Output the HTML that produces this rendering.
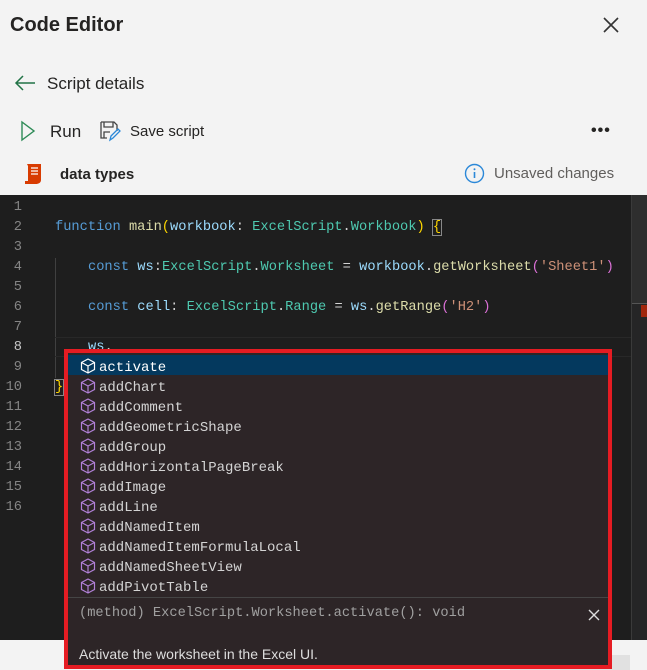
<!DOCTYPE html>
<html><head><meta charset="utf-8">
<style>
*{margin:0;padding:0;box-sizing:border-box}
html,body{width:647px;height:670px;overflow:hidden;background:#f3f3f3;font-family:"Liberation Sans",sans-serif;position:relative}
.abs{position:absolute;white-space:nowrap}
.mono{font-family:"Liberation Mono",monospace;font-size:13.7px}
#ed{position:absolute;left:0;top:195px;width:647px;height:445px;background:#1e1e1e}
#inner{position:absolute;left:0;top:3px;width:631px;height:440px}
#sb{position:absolute;left:631px;top:195px;width:16px;height:445px;background:#252526;border-left:1px solid #3a3a3a}
.ln{position:absolute;left:0;width:22px;text-align:right;color:#858585}
.kw{color:#569cd6}.ty{color:#4ec9b0}.st{color:#ce9178}.fn{color:#dcdcaa}.pl{color:#d4d4d4}.br{color:#ffd700}.vr{color:#9cdcfe}
#box{position:absolute;left:64px;top:349px;width:548px;height:320px;border:4px solid #e51c23}
#list{position:absolute;left:0;top:0;width:540px;height:244px;background:#2d2527}
.it{position:absolute;left:0;width:540px;height:20px;color:#d4d4d4}
.it svg{position:absolute;left:12px;top:3px}
.it span{position:absolute;left:31px;top:5px;font-size:14px}
#doc{position:absolute;left:0;top:244px;width:540px;height:68px;background:#2d2527;border-top:1px solid #454545}
</style></head><body>
<div class="abs" style="left:10px;top:14px;font-size:20px;font-weight:bold;color:#252423">Code Editor</div>
<svg class="abs" style="left:602px;top:16px" width="18" height="18" viewBox="0 0 18 18"><path d="M2 2L16 16M16 2L2 16" stroke="#333" stroke-width="1.6"/></svg>
<svg class="abs" style="left:14px;top:75px" width="22" height="16" viewBox="0 0 22 16"><path d="M21 8H2M9 1L2 8L9 15" stroke="#217346" stroke-width="1.5" fill="none"/></svg>
<div class="abs" style="left:47px;top:74px;font-size:17px;color:#252423">Script details</div>
<svg class="abs" style="left:20px;top:120px" width="16" height="22" viewBox="0 0 16 22"><path d="M2 2L14 11L2 20Z" stroke="#2e8b57" stroke-width="1.4" fill="none"/></svg>
<div class="abs" style="left:50px;top:122px;font-size:17px;color:#252423">Run</div>
<svg class="abs" style="left:99px;top:120px" width="22" height="22" viewBox="0 0 22 22"><path d="M2 2H15L18 5V11M2 2V18H8M5 2V7H14V2M5 18V12H11" stroke="#444" stroke-width="1.3" fill="none"/><path d="M11 20L12 16L19 9L21 11L14 18Z" stroke="#2b88d8" stroke-width="1.3" fill="none"/></svg>
<div class="abs" style="left:130px;top:123px;font-size:15px;color:#252423">Save script</div>
<div class="abs" style="left:591px;top:122px;font-size:16px;font-weight:bold;color:#252423;letter-spacing:1px">•••</div>
<svg class="abs" style="left:23px;top:162px" width="22" height="24" viewBox="0 0 22 24"><path d="M4 2H18V18C18 21 15 22 13 22H2V19H5V4Z" fill="#d83b01"/><path d="M8 6H15M8 9H15M8 12H15" stroke="#fff" stroke-width="1.3"/></svg>
<div class="abs" style="left:60px;top:166px;font-size:15px;font-weight:bold;color:#252423">data types</div>
<svg class="abs" style="left:464px;top:163px" width="21" height="21" viewBox="0 0 21 21"><circle cx="10.5" cy="10.5" r="9" stroke="#2b88d8" stroke-width="1.4" fill="none"/><path d="M10.5 9V15" stroke="#2b88d8" stroke-width="1.6"/><circle cx="10.5" cy="6.3" r="1" fill="#2b88d8"/></svg>
<div class="abs" style="left:494px;top:165px;font-size:15px;color:#605e5c">Unsaved changes</div>

<div class="abs" style="left:510px;top:655px;width:120px;height:15px;background:#e1e1e1"></div>

<div id="ed" class="mono"><div id="inner">
<div class="ln" style="top:2px">1</div><div class="ln" style="top:22px">2</div><div class="ln" style="top:42px">3</div><div class="ln" style="top:62px">4</div><div class="ln" style="top:82px">5</div><div class="ln" style="top:102px">6</div><div class="ln" style="top:122px">7</div><div class="ln" style="top:142px;color:#c6c6c6">8</div><div class="ln" style="top:162px">9</div><div class="ln" style="top:182px">10</div><div class="ln" style="top:202px">11</div><div class="ln" style="top:222px">12</div><div class="ln" style="top:242px">13</div><div class="ln" style="top:262px">14</div><div class="ln" style="top:282px">15</div><div class="ln" style="top:302px">16</div>
<div class="abs" style="left:55px;top:60px;width:1px;height:120px;background:#404040"></div>
<div class="abs" style="left:55px;top:139px;width:576px;height:20px;border-top:1px solid #282828;border-bottom:1px solid #282828"></div>
<div class="abs pl" style="left:55px;top:22px"><span class="kw">function</span> <span class="fn">main</span><span class="br">(</span><span class="vr">workbook</span>: <span class="ty">ExcelScript</span>.<span class="ty">Workbook</span><span class="br">)</span> <span class="br" style="outline:1px solid #888">{</span></div>
<div class="abs pl" style="left:88px;top:62px"><span class="kw">const</span> <span class="vr">ws</span>:<span class="ty">ExcelScript</span>.<span class="ty">Worksheet</span> = <span class="vr">workbook</span>.<span class="fn">getWorksheet</span><span style="color:#da70d6">(</span><span class="st">'Sheet1'</span><span style="color:#da70d6">)</span></div>
<div class="abs pl" style="left:88px;top:102px"><span class="kw">const</span> <span class="vr">cell</span>: <span class="ty">ExcelScript</span>.<span class="ty">Range</span> = <span class="vr">ws</span>.<span class="fn">getRange</span><span style="color:#da70d6">(</span><span class="st">'H2'</span><span style="color:#da70d6">)</span></div>
<div class="abs pl" style="left:88px;top:142px"><span class="vr">ws</span>.</div>
<div class="abs br" style="left:55px;top:182px;outline:1px solid #888">}</div>
</div></div>
<div id="sb"><div class="abs" style="left:0;top:0;width:16px;height:108px;background:#2e2e2e"></div><div class="abs" style="left:0;top:108px;width:16px;height:1px;background:#555"></div><div class="abs" style="left:9px;top:110px;width:7px;height:12px;background:#a1260d"></div></div>

<div id="box" class="mono">
<div id="list">
<div class="it" style="top:2px;background:#04395e;color:#fff"><svg width="16" height="16" viewBox="0 0 16 16"><path d="M8 1L14.5 4.5V11.5L8 15L1.5 11.5V4.5Z M1.5 4.5L8 8L14.5 4.5 M8 8V15" stroke="#fff" stroke-width="1.2" fill="none"/></svg><span>activate</span></div>
<div class="it" style="top:22px"><svg width="16" height="16" viewBox="0 0 16 16"><path d="M8 1L14.5 4.5V11.5L8 15L1.5 11.5V4.5Z M1.5 4.5L8 8L14.5 4.5 M8 8V15" stroke="#b180d7" stroke-width="1.2" fill="none"/></svg><span>addChart</span></div>
<div class="it" style="top:42px"><svg width="16" height="16" viewBox="0 0 16 16"><path d="M8 1L14.5 4.5V11.5L8 15L1.5 11.5V4.5Z M1.5 4.5L8 8L14.5 4.5 M8 8V15" stroke="#b180d7" stroke-width="1.2" fill="none"/></svg><span>addComment</span></div>
<div class="it" style="top:62px"><svg width="16" height="16" viewBox="0 0 16 16"><path d="M8 1L14.5 4.5V11.5L8 15L1.5 11.5V4.5Z M1.5 4.5L8 8L14.5 4.5 M8 8V15" stroke="#b180d7" stroke-width="1.2" fill="none"/></svg><span>addGeometricShape</span></div>
<div class="it" style="top:82px"><svg width="16" height="16" viewBox="0 0 16 16"><path d="M8 1L14.5 4.5V11.5L8 15L1.5 11.5V4.5Z M1.5 4.5L8 8L14.5 4.5 M8 8V15" stroke="#b180d7" stroke-width="1.2" fill="none"/></svg><span>addGroup</span></div>
<div class="it" style="top:102px"><svg width="16" height="16" viewBox="0 0 16 16"><path d="M8 1L14.5 4.5V11.5L8 15L1.5 11.5V4.5Z M1.5 4.5L8 8L14.5 4.5 M8 8V15" stroke="#b180d7" stroke-width="1.2" fill="none"/></svg><span>addHorizontalPageBreak</span></div>
<div class="it" style="top:122px"><svg width="16" height="16" viewBox="0 0 16 16"><path d="M8 1L14.5 4.5V11.5L8 15L1.5 11.5V4.5Z M1.5 4.5L8 8L14.5 4.5 M8 8V15" stroke="#b180d7" stroke-width="1.2" fill="none"/></svg><span>addImage</span></div>
<div class="it" style="top:142px"><svg width="16" height="16" viewBox="0 0 16 16"><path d="M8 1L14.5 4.5V11.5L8 15L1.5 11.5V4.5Z M1.5 4.5L8 8L14.5 4.5 M8 8V15" stroke="#b180d7" stroke-width="1.2" fill="none"/></svg><span>addLine</span></div>
<div class="it" style="top:162px"><svg width="16" height="16" viewBox="0 0 16 16"><path d="M8 1L14.5 4.5V11.5L8 15L1.5 11.5V4.5Z M1.5 4.5L8 8L14.5 4.5 M8 8V15" stroke="#b180d7" stroke-width="1.2" fill="none"/></svg><span>addNamedItem</span></div>
<div class="it" style="top:182px"><svg width="16" height="16" viewBox="0 0 16 16"><path d="M8 1L14.5 4.5V11.5L8 15L1.5 11.5V4.5Z M1.5 4.5L8 8L14.5 4.5 M8 8V15" stroke="#b180d7" stroke-width="1.2" fill="none"/></svg><span>addNamedItemFormulaLocal</span></div>
<div class="it" style="top:202px"><svg width="16" height="16" viewBox="0 0 16 16"><path d="M8 1L14.5 4.5V11.5L8 15L1.5 11.5V4.5Z M1.5 4.5L8 8L14.5 4.5 M8 8V15" stroke="#b180d7" stroke-width="1.2" fill="none"/></svg><span>addNamedSheetView</span></div>
<div class="it" style="top:222px"><svg width="16" height="16" viewBox="0 0 16 16"><path d="M8 1L14.5 4.5V11.5L8 15L1.5 11.5V4.5Z M1.5 4.5L8 8L14.5 4.5 M8 8V15" stroke="#b180d7" stroke-width="1.2" fill="none"/></svg><span>addPivotTable</span></div>
</div>
<div id="doc">
<div class="abs" style="left:11px;top:8px;color:#a0a0a0">(method) ExcelScript.Worksheet.activate(): void</div>
<svg class="abs" style="left:520px;top:11px" width="12" height="12" viewBox="0 0 12 12"><path d="M1 1L11 11M11 1L1 11" stroke="#ddd" stroke-width="1.4"/></svg>
<div class="abs" style="left:11px;top:48px;font-family:'Liberation Sans',sans-serif;font-size:14px;color:#ddd">Activate the worksheet in the Excel UI.</div>
</div>
</div>
</body></html>
